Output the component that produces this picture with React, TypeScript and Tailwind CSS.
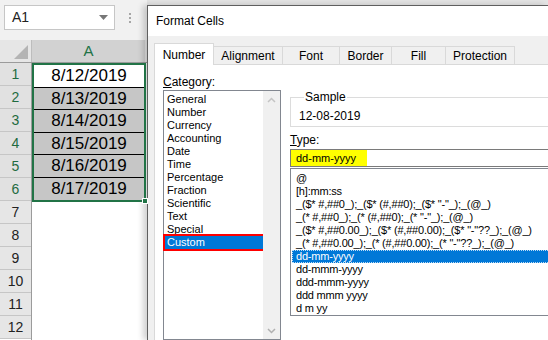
import React from 'react';

const dates = ['8/12/2019', '8/13/2019', '8/14/2019', '8/15/2019', '8/16/2019', '8/17/2019'];

const categories = [
  'General', 'Number', 'Currency', 'Accounting', 'Date', 'Time',
  'Percentage', 'Fraction', 'Scientific', 'Text', 'Special', 'Custom',
];

const formats = [
  '@',
  '[h]:mm:ss',
  '_($* #,##0_);_($* (#,##0);_($* "-"_);_(@_)',
  '_(* #,##0_);_(* (#,##0);_(* "-"_);_(@_)',
  '_($* #,##0.00_);_($* (#,##0.00);_($* "-"??_);_(@_)',
  '_(* #,##0.00_);_(* (#,##0.00);_(* "-"??_);_(@_)',
  'dd-mm-yyyy',
  'dd-mmm-yyyy',
  'ddd-mmm-yyyy',
  'ddd mmm yyyy',
  'd m yy',
];

const tabs = [
  { label: 'Number', w: 'w-[60px]' },
  { label: 'Alignment', w: 'w-[69px]' },
  { label: 'Font', w: 'w-[57px]' },
  { label: 'Border', w: 'w-[52px]' },
  { label: 'Fill', w: 'w-[54px]' },
  { label: 'Protection', w: 'w-[69px]' },
];

const Sheet = () => (
  <div className="w-[147px] shrink-0 flex flex-col bg-white">
    {/* name box strip */}
    <div className="h-[40px] shrink-0 bg-[#f1f1f1] flex items-start pt-[5px] pl-[4px]">
      <div className="w-[111px] h-[25px] bg-white border border-[#c6c6c6] flex items-center justify-between pl-[7px] pr-[6px]">
        <span className="text-[14px] text-[#222]">A1</span>
        <svg width="9" height="5" viewBox="0 0 9 5">
          <path d="M0 0h9L4.5 5z" fill="#777" />
        </svg>
      </div>
      <div className="ml-[14px] mt-[8px] flex flex-col gap-[2px]">
        <div className="w-[2px] h-[2px] bg-[#a6a6a6]" />
        <div className="w-[2px] h-[2px] bg-[#a6a6a6]" />
        <div className="w-[2px] h-[2px] bg-[#a6a6a6]" />
      </div>
    </div>

    {/* column header */}
    <div className="h-[23px] shrink-0 flex border-b border-[#9b9b9b]">
      <div className="w-[32px] bg-[#e6e6e6] border-r border-[#bdbdbd] flex items-end justify-end pr-[3px] pb-[3px]">
        <svg width="14" height="14" viewBox="0 0 14 14">
          <path d="M14 0V14H0z" fill="#b4b4b4" />
        </svg>
      </div>
      <div className="w-[113px] bg-[#d2d2d2] text-[#217346] text-[15px] flex items-center justify-center">A</div>
      <div className="flex-1 bg-[#e6e6e6]" />
    </div>

    <div className="flex-1 flex">
      {/* row headers */}
      <div className="w-[32px] flex flex-col border-r border-[#9b9b9b]">
        {Array.from({ length: 12 }, (_, i) => (
          <div
            key={i}
            className={`h-[23px] shrink-0 border-b border-[#c6c6c6] flex items-center justify-center text-[14px] leading-none ${
              i < 6 ? 'bg-[#e1e1e1] text-[#1f6b3f]' : 'bg-[#e6e6e6] text-[#222]'
            }`}
          >
            {i + 1}
          </div>
        ))}
      </div>

      {/* column A */}
      <div className="w-[114px] flex flex-col">
        <div className="h-[139px] shrink-0 border-2 border-[#217346] flex flex-col relative">
          {dates.map((d, i) => (
            <div
              key={d}
              className={`h-[22.5px] shrink-0 overflow-hidden flex items-center justify-center text-[17px] leading-none text-black ${
                i === 0 ? 'bg-white' : 'bg-[#c6c6c6]'
              } ${i < 5 ? 'border-b-[1.5px] border-black' : ''}`}
            >
              {d}
            </div>
          ))}
          <div className="absolute -right-[4px] -bottom-[4px] w-[6px] h-[6px] bg-[#217346] border border-white" />
        </div>
        <div className="flex-1 bg-white" />
      </div>
    </div>
  </div>
);

const CategoryList = () => (
  <div className="w-[122px] flex flex-col">
    <div className="h-[15px] text-[12px] leading-[15px] text-black">
      <span className="underline">C</span>ategory:
    </div>
    <div className="h-[250px] border border-[#828790] bg-white flex">
      <div className="flex-1 pt-[2px] flex flex-col">
        {categories.map(c =>
          c === 'Custom' ? (
            <div
              key={c}
              className="h-[13px] leading-[13px] text-[11px] ml-[1px] w-[98px] pl-[2px] bg-[#0078d7] text-white outline-2 outline-[#ff0000]"
            >
              {c}
            </div>
          ) : (
            <div key={c} className="h-[13px] leading-[13px] text-[11px] pl-[3px] text-black">
              {c}
            </div>
          )
        )}
      </div>
      <div className="w-[17px] bg-[#f0f0f0] flex flex-col justify-between">
        <div className="h-[17px] flex items-center justify-center">
          <svg width="9" height="6" viewBox="0 0 9 6">
            <path d="M1 5l3.5-3.5L8 5" fill="none" stroke="#c4c4c4" strokeWidth="1.5" />
          </svg>
        </div>
        <div className="h-[17px] flex items-center justify-center">
          <svg width="9" height="6" viewBox="0 0 9 6">
            <path d="M1 1l3.5 3.5L8 1" fill="none" stroke="#b0b0b0" strokeWidth="1.5" />
          </svg>
        </div>
      </div>
    </div>
  </div>
);

const TypeArea = () => (
  <div className="w-[300px] shrink-0 ml-[9px] mt-[15px] flex flex-col">
    <fieldset className="border border-[#dcdcdc] pl-[8px] pt-[5px] pb-[3px]">
      <legend className="ml-[5px] px-[1px] text-[12px] leading-[14px] text-black">Sample</legend>
      <div className="text-[12px] leading-[14px] text-black">12-08-2019</div>
    </fieldset>

    <div className="mt-[6px] text-[12px] leading-[14px] text-black">
      <span className="underline">T</span>ype:
    </div>
    <div className="mt-[2px] h-[18px] border border-[#7a7a7a] bg-white flex">
      <div className="w-[76px] h-full bg-[#ffff00] pl-[5px] text-[11px] leading-[16px] text-black">dd-mm-yyyy</div>
    </div>

    <div className="mt-[1px] border border-[#828790] bg-white pt-[3px] px-[1px] flex flex-col">
      {formats.map(f =>
        f === 'dd-mm-yyyy' ? (
          <div
            key={f}
            className="h-[13px] leading-[13px] text-[11px] tracking-[-0.2px] pl-[4px] bg-[#0078d7] text-white outline-1 outline-dotted outline-[#bcdcf6] -outline-offset-1 whitespace-nowrap"
          >
            {f}
          </div>
        ) : (
          <div key={f} className="h-[13px] leading-[13px] text-[11px] tracking-[-0.2px] pl-[4px] text-black whitespace-nowrap">
            {f}
          </div>
        )
      )}
    </div>
  </div>
);

const Dialog = () => (
  <div className="flex-1 mt-[5px] border-t border-l border-[#5f5f5f] bg-[#f0f0f0] flex flex-col shadow-[-4px_0_6px_rgba(0,0,0,0.18)] overflow-hidden">
    <div className="h-[30px] shrink-0 bg-white flex items-center pl-[8px] text-[12px] text-black">Format Cells</div>
    <div className="flex-1 pt-[7px] pl-[6px] flex flex-col">
      {/* tabs */}
      <div className="h-[22px] flex items-end">
        {tabs.map((t, i) =>
          i === 0 ? (
            <div
              key={t.label}
              className={`${t.w} h-[22px] bg-white border-l border-t border-r border-[#d9d9d9] relative z-10 flex items-center justify-center text-[12px] text-black`}
            >
              {t.label}
            </div>
          ) : (
            <div
              key={t.label}
              className={`${t.w} h-[19px] bg-[#f0f0f0] border-t border-r border-[#d9d9d9] flex items-center justify-center text-[12px] text-black`}
            >
              {t.label}
            </div>
          )
        )}
      </div>

      {/* panel */}
      <div className="flex-1 -mt-px bg-white border-t border-l border-[#d9d9d9] flex items-start pt-[10px] pl-[8px]">
        <CategoryList />
        <TypeArea />
      </div>
    </div>
  </div>
);

export default function App() {
  return (
    <div className="w-[548px] h-[340px] overflow-hidden flex bg-[#e4e4e4] font-['Liberation_Sans',Arial,sans-serif]">
      <Sheet />
      <Dialog />
    </div>
  );
}
